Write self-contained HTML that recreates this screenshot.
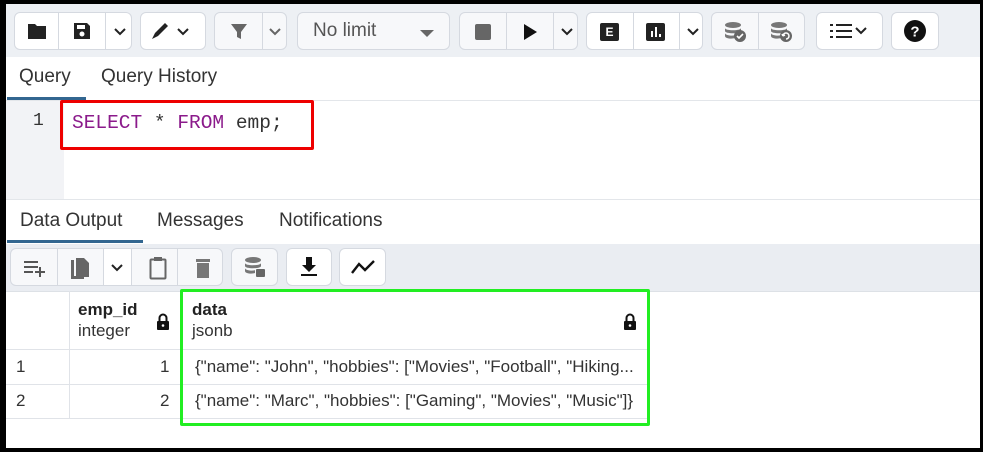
<!DOCTYPE html>
<html><head><meta charset="utf-8"><style>
*{box-sizing:border-box;margin:0;padding:0}
body{width:983px;height:452px;background:#000;position:relative;overflow:hidden;font-family:"Liberation Sans",sans-serif;color:#222}
#app{position:absolute;left:6px;top:4px;width:974px;height:444px;background:#fff;overflow:hidden}
.abs{position:absolute}
.tb{left:0;top:0;width:974px;height:53px;background:#edf0f4}
.btn{position:absolute;border:1px solid #d5d9e0;background:#f7f8fa;border-radius:6px;display:flex;align-items:center;justify-content:center}
.btn.w{background:#fff}
.sep{position:absolute;top:0;bottom:0;width:1px;background:#d5d9e0}
.tab{position:absolute;font-size:19px;color:#333}
.mono{font-family:"Liberation Mono",monospace}
.c{font-size:17px;color:#333}
</style></head><body><div id="app">
<div class="abs tb"></div>
<div class="btn w" style="left:8px;top:8px;width:118px;height:38px">
 <div class="sep" style="left:43px"></div><div class="sep" style="left:90px"></div>
 <svg class="abs" style="left:12px;top:9px" width="20" height="18"><path d="M1 2h7l2 2h9v13H1z" fill="#222"/></svg>
 <svg class="abs" style="left:58px;top:9px" width="18" height="18"><path d="M1 1h13l3 3v13H1z" fill="#222"/><rect x="4" y="3" width="8" height="4" fill="#fff"/><circle cx="9" cy="12" r="2.5" fill="#fff"/></svg>
 <svg class="abs" style="left:99px;top:15px" width="12" height="8"><path d="M1 1l5 5 5-5" stroke="#222" stroke-width="2" fill="none"/></svg>
</div>
<div class="btn w" style="left:134px;top:8px;width:66px;height:38px">
 <svg width="48" height="22"><path d="M3 19l3-6 10-10 3 3-10 10z" fill="#222"/><path d="M29 9l5 5 5-5" stroke="#222" stroke-width="2" fill="none"/></svg>
</div>
<div class="btn" style="left:208px;top:8px;width:73px;height:38px">
 <div class="sep" style="left:47px"></div>
 <svg class="abs" style="left:15px;top:10px" width="18" height="18"><path d="M1 1h16l-6 8v7l-4-2V9z" fill="#666"/></svg>
 <svg class="abs" style="left:54px;top:15px" width="12" height="8"><path d="M1 1l5 5 5-5" stroke="#666" stroke-width="2" fill="none"/></svg>
</div>
<div class="btn" style="left:291px;top:8px;width:153px;height:38px;justify-content:flex-start">
 <span style="margin-left:15px;font-size:19px;color:#555">No limit</span>
 <svg class="abs" style="left:121px;top:16px" width="16" height="8"><path d="M1 1h14l-7 7z" fill="#666"/></svg>
</div>
<div class="btn" style="left:453px;top:8px;width:119px;height:38px">
 <div class="sep" style="left:46px"></div><div class="sep" style="left:93px"></div>
 <div class="abs" style="left:15px;top:11px;width:16px;height:16px;background:#666;border-radius:2px"></div>
 <svg class="abs" style="left:62px;top:10px" width="16" height="18"><path d="M2 1l13 8-13 8z" fill="#111"/></svg>
 <svg class="abs" style="left:101px;top:15px" width="12" height="8"><path d="M1 1l5 5 5-5" stroke="#222" stroke-width="2" fill="none"/></svg>
</div>
<div class="btn w" style="left:580px;top:8px;width:117px;height:38px">
 <div class="sep" style="left:46px"></div><div class="sep" style="left:92px"></div>
 <div class="abs" style="left:13px;top:10px;width:19px;height:18px;background:#222;border-radius:2px;color:#fff;font-size:12px;font-weight:bold;text-align:center;line-height:18px">E</div>
 <svg class="abs" style="left:59px;top:10px" width="19" height="18"><rect width="19" height="18" rx="2" fill="#222"/><rect x="5" y="8" width="2" height="6" fill="#fff"/><rect x="9" y="4" width="2" height="10" fill="#fff"/><rect x="13" y="11" width="2" height="3" fill="#fff"/></svg>
 <svg class="abs" style="left:100px;top:15px" width="12" height="8"><path d="M1 1l5 5 5-5" stroke="#222" stroke-width="2" fill="none"/></svg>
</div>
<div class="btn" style="left:705px;top:8px;width:94px;height:38px">
 <div class="sep" style="left:46px"></div>
 <svg class="abs" style="left:12px;top:8px" width="24" height="22"><ellipse cx="9" cy="4" rx="8" ry="3" fill="#777"/><path d="M1 7c0 3 16 3 16 0v3c0 3-16 3-16 0zM1 12c0 3 10 3 10 2v3c-2 1-10 1-10-2z" fill="#777"/><circle cx="16" cy="15" r="6" fill="#666"/><path d="M13 15l2 2 4-4" stroke="#fff" stroke-width="1.6" fill="none"/></svg>
 <svg class="abs" style="left:58px;top:8px" width="24" height="22"><ellipse cx="9" cy="4" rx="8" ry="3" fill="#777"/><path d="M1 7c0 3 16 3 16 0v3c0 3-16 3-16 0zM1 12c0 3 10 3 10 2v3c-2 1-10 1-10-2z" fill="#777"/><circle cx="16" cy="15" r="6" fill="#666"/><path d="M13 15a3 3 0 1 1 3 3M13 15l-1-2M13 15l2-1" stroke="#fff" stroke-width="1.5" fill="none"/></svg>
</div>
<div class="btn w" style="left:810px;top:8px;width:67px;height:38px">
 <svg width="44" height="20"><g fill="#222"><rect x="2" y="3" width="3" height="2"/><rect x="2" y="9" width="3" height="2"/><rect x="2" y="15" width="3" height="2"/><rect x="8" y="3" width="16" height="2"/><rect x="8" y="9" width="16" height="2"/><rect x="8" y="15" width="16" height="2"/></g><path d="M28 7l5 5 5-5" stroke="#222" stroke-width="2" fill="none"/></svg>
</div>
<div class="btn w" style="left:885px;top:8px;width:48px;height:38px">
 <svg width="24" height="24"><circle cx="12" cy="12" r="11" fill="#111"/><text x="12" y="17.5" text-anchor="middle" font-size="15" font-weight="bold" fill="#fff" font-family="Liberation Sans">?</text></svg>
</div>
<div class="tab" style="left:13px;top:62px">Query</div>
<div class="tab" style="left:95px;top:62px">Query History</div>
<div class="abs" style="left:1px;top:93px;width:79px;height:3px;background:#326690"></div>
<div class="abs" style="left:0;top:96px;width:974px;height:1px;background:#e3e6ea"></div>
<div class="abs" style="left:0;top:97px;width:58px;height:98px;background:#f2f3f6"></div>
<div class="abs mono" style="left:27px;top:107px;font-size:18px;color:#333">1</div>
<div class="abs" style="left:54px;top:96px;width:254px;height:50px;border:3px solid #ee0000;border-radius:2px"></div>
<div class="abs mono" style="left:66px;top:108px;font-size:19.5px;color:#333;white-space:pre"><span style="color:#8b1a8b">SELECT</span> * <span style="color:#8b1a8b">FROM</span> emp;</div>
<div class="abs" style="left:0;top:195px;width:974px;height:1px;background:#e3e6ea"></div>
<div class="tab" style="left:14px;top:206px">Data Output</div>
<div class="tab" style="left:151px;top:206px">Messages</div>
<div class="tab" style="left:273px;top:206px">Notifications</div>
<div class="abs" style="left:1px;top:236px;width:136px;height:3px;background:#326690"></div>
<div class="abs" style="left:0;top:240px;width:974px;height:47px;background:#eaedf2"></div>
<div class="btn" style="left:4px;top:244px;width:213px;height:38px">
 <div class="sep" style="left:46px"></div><div class="sep" style="left:92px"></div><div class="sep" style="left:120px"></div><div class="sep" style="left:166px"></div>
 <div class="abs" style="left:93px;top:0;width:27px;height:36px;background:#fff"></div>
 <svg class="abs" style="left:12px;top:10px" width="24" height="18"><g fill="#555"><rect x="1" y="2" width="14" height="2"/><rect x="1" y="7" width="14" height="2"/><rect x="1" y="12" width="9" height="2"/><rect x="12" y="12" width="10" height="2"/><rect x="16" y="8" width="2" height="10"/></g></svg>
 <svg class="abs" style="left:59px;top:8px" width="20" height="22"><path d="M1 3h3v16h10v3H1z" fill="#666"/><path d="M6 1h8l5 5v14H6z" fill="#666"/></svg>
 <svg class="abs" style="left:100px;top:15px" width="12" height="8"><path d="M1 1l5 5 5-5" stroke="#222" stroke-width="2" fill="none"/></svg>
 <svg class="abs" style="left:138px;top:7px" width="18" height="24"><rect x="1.5" y="3.5" width="15" height="19" rx="1" fill="none" stroke="#666" stroke-width="2"/><rect x="5" y="1" width="8" height="4" fill="#666"/></svg>
 <svg class="abs" style="left:184px;top:8px" width="16" height="22"><rect x="1" y="2" width="14" height="3" fill="#777"/><rect x="2" y="6" width="12" height="15" fill="#777"/></svg>
</div>
<div class="btn" style="left:225px;top:244px;width:47px;height:38px">
 <svg width="24" height="24"><ellipse cx="10" cy="5" rx="8" ry="3" fill="#777"/><path d="M2 8c0 3 16 3 16 0v3c0 3-16 3-16 0zM2 13c0 3 10 3 10 2v3c-2 1-10 1-10-2z" fill="#777"/><rect x="13" y="14" width="9" height="8" rx="1" fill="#666"/></svg>
</div>
<div class="btn w" style="left:280px;top:244px;width:46px;height:38px">
 <svg width="20" height="22"><path d="M7 1h6v8h4l-7 7-7-7h4z" fill="#111"/><rect x="2" y="18" width="16" height="2" fill="#111"/></svg>
</div>
<div class="btn w" style="left:333px;top:244px;width:47px;height:38px">
 <svg width="26" height="18"><path d="M2 15l7-9 6 6 9-9" stroke="#111" stroke-width="2.4" fill="none"/></svg>
</div>
<div class="abs" style="left:0;top:287px;width:974px;height:1px;background:#dde1e6"></div>
<div class="abs" style="left:63px;top:287px;width:1px;height:127px;background:#e0e3e8"></div>
<div class="abs" style="left:0;top:345px;width:642px;height:1px;background:#e0e3e8"></div>
<div class="abs" style="left:0;top:380px;width:642px;height:1px;background:#e0e3e8"></div>
<div class="abs" style="left:0;top:414px;width:642px;height:1px;background:#e0e3e8"></div>
<div class="abs" style="left:72px;top:296px;font-size:17px;font-weight:bold;color:#222">emp_id</div>
<div class="abs c" style="left:72px;top:317px">integer</div>
<svg class="abs" style="left:150px;top:309px" width="14" height="17"><path d="M3.5 8V5a3.5 3.5 0 0 1 7 0v3" stroke="#111" stroke-width="2" fill="none"/><rect x="1" y="8" width="12" height="9" rx="1" fill="#111"/><circle cx="7" cy="12.5" r="1.3" fill="#fff"/></svg>
<div class="abs" style="left:186px;top:296px;font-size:17px;font-weight:bold;color:#222">data</div>
<div class="abs c" style="left:186px;top:317px">jsonb</div>
<svg class="abs" style="left:617px;top:309px" width="14" height="17"><path d="M3.5 8V5a3.5 3.5 0 0 1 7 0v3" stroke="#111" stroke-width="2" fill="none"/><rect x="1" y="8" width="12" height="9" rx="1" fill="#111"/><circle cx="7" cy="12.5" r="1.3" fill="#fff"/></svg>
<div class="abs c" style="left:10px;top:353px">1</div>
<div class="abs c" style="left:10px;top:387px">2</div>
<div class="abs c" style="left:154px;top:353px">1</div>
<div class="abs c" style="left:154px;top:387px">2</div>
<div class="abs c" style="left:189px;top:353px;white-space:nowrap;width:446px;overflow:hidden">{"name": "John", "hobbies": ["Movies", "Football", "Hiking...</div>
<div class="abs c" style="left:189px;top:387px;white-space:nowrap">{"name": "Marc", "hobbies": ["Gaming", "Movies", "Music"]}</div>
<div class="abs" style="left:174px;top:285px;width:470px;height:137px;border:3px solid #22ee22;border-radius:2px"></div>
</div></body></html>
